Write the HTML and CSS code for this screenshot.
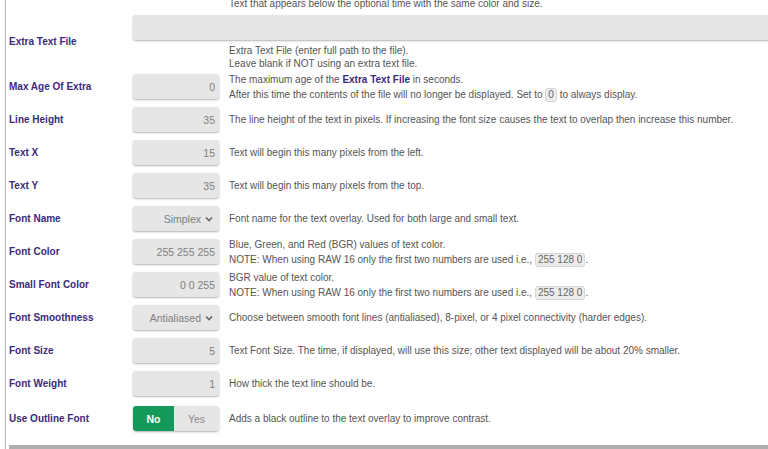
FILE: index.html
```html
<!DOCTYPE html>
<html lang="en">

<head>
    <meta charset="UTF-8">
    <meta name="viewport" content="width=device-width, initial-scale=1.0">
    <title>Overlay Settings</title>
    <link rel="stylesheet" href="styles.css">
</head>

<body>
    <div class="panel">
        <div class="row row-tail">
            <div class="label"></div>
            <div class="field"></div>
            <div class="desc">Text that appears below the optional time with the same color and size.</div>
        </div>

        <div class="row row-wide">
            <div class="label">Extra Text File</div>
            <div class="wide-col">
                <div class="input input-wide"></div>
                <div class="desc">Extra Text File (enter full path to the file).<br>Leave blank if NOT using an extra text file.</div>
            </div>
        </div>

        <div class="row">
            <div class="label">Max Age Of Extra</div>
            <div class="field"><div class="input">0</div></div>
            <div class="desc">The maximum age of the <b class="ref">Extra Text File</b> in seconds.<br>After this time the contents of the file will no longer be displayed. Set to <span class="code">0</span> to always display.</div>
        </div>

        <div class="row">
            <div class="label">Line Height</div>
            <div class="field"><div class="input">35</div></div>
            <div class="desc">The line height of the text in pixels. If increasing the font size causes the text to overlap then increase this number.</div>
        </div>

        <div class="row">
            <div class="label">Text X</div>
            <div class="field"><div class="input">15</div></div>
            <div class="desc">Text will begin this many pixels from the left.</div>
        </div>

        <div class="row">
            <div class="label">Text Y</div>
            <div class="field"><div class="input">35</div></div>
            <div class="desc">Text will begin this many pixels from the top.</div>
        </div>

        <div class="row">
            <div class="label">Font Name</div>
            <div class="field">
                <div class="input select">Simplex
                    <svg class="chevron" width="8" height="6" viewBox="0 0 8 6"><path d="M1 1.5 L4 4.5 L7 1.5" fill="none" stroke="#666" stroke-width="1.6"/></svg>
                </div>
            </div>
            <div class="desc">Font name for the text overlay. Used for both large and small text.</div>
        </div>

        <div class="row">
            <div class="label">Font Color</div>
            <div class="field"><div class="input">255 255 255</div></div>
            <div class="desc">Blue, Green, and Red (BGR) values of text color.<br>NOTE: When using RAW 16 only the first two numbers are used i.e., <span class="code">255 128 0</span>.</div>
        </div>

        <div class="row">
            <div class="label">Small Font Color</div>
            <div class="field"><div class="input">0 0 255</div></div>
            <div class="desc">BGR value of text color.<br>NOTE: When using RAW 16 only the first two numbers are used i.e., <span class="code">255 128 0</span>.</div>
        </div>

        <div class="row">
            <div class="label">Font Smoothness</div>
            <div class="field">
                <div class="input select">Antialiased
                    <svg class="chevron" width="8" height="6" viewBox="0 0 8 6"><path d="M1 1.5 L4 4.5 L7 1.5" fill="none" stroke="#666" stroke-width="1.6"/></svg>
                </div>
            </div>
            <div class="desc">Choose between smooth font lines (antialiased), 8-pixel, or 4 pixel connectivity (harder edges).</div>
        </div>

        <div class="row">
            <div class="label">Font Size</div>
            <div class="field"><div class="input">5</div></div>
            <div class="desc">Text Font Size. The time, if displayed, will use this size; other text displayed will be about 20% smaller.</div>
        </div>

        <div class="row">
            <div class="label">Font Weight</div>
            <div class="field"><div class="input">1</div></div>
            <div class="desc">How thick the text line should be.</div>
        </div>

        <div class="row row-last">
            <div class="label">Use Outline Font</div>
            <div class="field">
                <div class="toggle">
                    <span class="toggle-btn active">No</span>
                    <span class="toggle-btn">Yes</span>
                </div>
            </div>
            <div class="desc">Adds a black outline to the text overlay to improve contrast.</div>
        </div>

        <div class="footer-bar"></div>
    </div>
</body>

</html>
```

FILE: styles.css
```css
html,
body {
    margin: 0;
    padding: 0;
    background-color: #fff;
    overflow: hidden;
}

body {
    font-family: "Liberation Sans", Arial, sans-serif;
    font-size: 10px;
    color: #555;
}

.panel {
    margin-left: 5px;
    margin-top: -4px;
    padding-left: 3px;
    border-left: 1px solid #b5b5b5;
    min-height: 460px;
    overflow: hidden;
}

.row {
    display: flex;
    align-items: center;
    height: 33px;
}

.row-tail {
    height: 15px;
}

.label {
    width: 124px;
    flex-shrink: 0;
    font-size: 10px;
    font-weight: bold;
    color: #3c2a7c;
}

.field {
    width: 86px;
    flex-shrink: 0;
}

.desc {
    margin-left: 10px;
    line-height: 15px;
    white-space: nowrap;
}

.ref {
    color: #3c2a7c;
}

.code {
    display: inline-block;
    padding: 0 2px;
    line-height: 12px;
    background-color: #ececec;
    border: 1px solid #d6d6d6;
    border-radius: 3px;
    color: #666;
}

.input {
    height: 25px;
    box-sizing: border-box;
    padding: 0 4px;
    display: flex;
    align-items: center;
    justify-content: flex-end;
    background-color: #e6e6e6;
    border-radius: 3px;
    box-shadow: 0 1px 2px rgba(0, 0, 0, 0.3);
    color: #808080;
    font-size: 10.5px;
}

.select {
    gap: 4px;
    padding-right: 6px;
}

.chevron {
    flex-shrink: 0;
}

/* wide input with its help text below */
.row-wide {
    height: auto;
    padding-top: 4px;
}

.row-wide .label {
    padding-bottom: 3px;
}

.wide-col {
    flex: 1;
    display: flex;
    flex-direction: column;
}

.input-wide {
    margin-right: -30px;
}

.wide-col .desc {
    margin-left: 96px;
    margin-top: 4px;
    line-height: 13px;
}

.row-last {
    margin-top: 2px;
}

.toggle {
    display: flex;
    height: 25px;
    border-radius: 3px;
    overflow: hidden;
    box-shadow: 0 1px 2px rgba(0, 0, 0, 0.3);
}

.toggle-btn {
    flex: 1;
    display: flex;
    align-items: center;
    justify-content: center;
    background-color: #e6e6e6;
    color: #888;
    font-size: 10.5px;
}

.toggle-btn.active {
    flex: 0 0 41px;
    background-color: #14995a;
    color: #fff;
    font-weight: bold;
}

.footer-bar {
    margin-top: 10px;
    height: 5px;
    background-color: #aeaeae;
}
```
